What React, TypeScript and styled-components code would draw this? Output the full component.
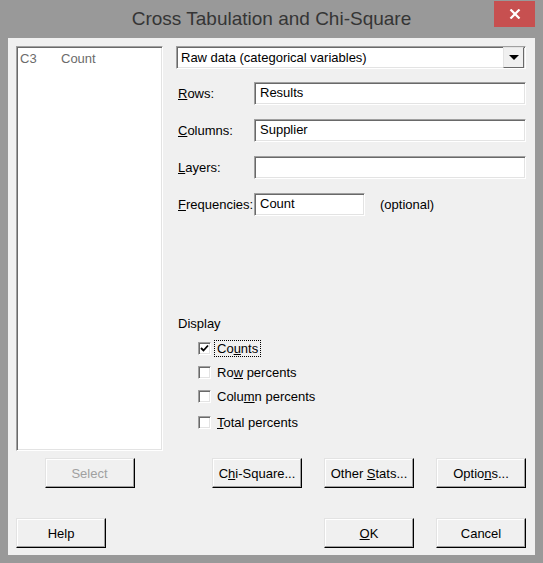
import React from 'react'
import styled, { createGlobalStyle } from 'styled-components'

const GlobalStyle = createGlobalStyle`
  html, body {
    margin: 0;
    padding: 0;
    background: #999999;
  }
  * {
    box-sizing: border-box;
  }
`

const Window = styled.div`
  width: 543px;
  height: 563px;
  background: #999999;
  display: flex;
  flex-direction: column;
  font-family: 'Liberation Sans', Arial, sans-serif;
  font-size: 13px;
  color: #000;
`

const TitleBar = styled.div`
  height: 38px;
  display: grid;
  grid-template-columns: 1fr auto 1fr;
  align-items: start;
  padding: 0 8px;
`

const Title = styled.div`
  grid-column: 2;
  padding-top: 8px;
  font-size: 19px;
  line-height: 21px;
  color: #353535;
`

const CloseButton = styled.div`
  grid-column: 3;
  justify-self: end;
  width: 41px;
  height: 26px;
  margin-top: 1px;
  background: #c75050;
  display: flex;
  align-items: center;
  justify-content: center;
`

const Client = styled.div`
  flex: 1;
  margin: 0 8px 8px;
  background: #f0f0f0;
  padding: 8px 9px 7px 8px;
  display: grid;
  grid-template-columns: 147px 1fr;
  grid-template-rows: 405px 37px 1fr 30px;
  column-gap: 13px;
`

const ListBox = styled.div`
  background: #fff;
  border: 1px solid;
  border-color: #a0a0a0 #ffffff #ffffff #a0a0a0;
  box-shadow: inset 1px 1px 0 #696969, inset -1px -1px 0 #e3e3e3;
  padding: 4px 3px;
`

const ListItem = styled.div`
  display: flex;
  color: #6b6b6b;
  line-height: 16px;
  span:first-child {
    width: 41px;
  }
`

const Form = styled.div`
  display: flex;
  flex-direction: column;
`

const Dropdown = styled.div`
  height: 23px;
  background: #fff;
  border: 1px solid;
  border-color: #a0a0a0 #ffffff #ffffff #a0a0a0;
  box-shadow: inset 1px 1px 0 #696969, inset -1px -1px 0 #e3e3e3;
  display: flex;
  align-items: center;
  justify-content: space-between;
  padding: 1px 1px 1px 4px;
`

const ArrowButton = styled.div`
  width: 21px;
  height: 21px;
  margin-top: -1px;
  background: #f0f0f0;
  border: 1px solid;
  border-color: #e3e3e3 #696969 #696969 #e3e3e3;
  display: flex;
  align-items: center;
  justify-content: center;
  &::after {
    content: '';
    border-left: 5px solid transparent;
    border-right: 5px solid transparent;
    border-top: 5px solid #000;
  }
`

const Fields = styled.div`
  margin-top: 13px;
  display: grid;
  grid-template-columns: 78px 1fr;
  row-gap: 14px;
  align-items: center;
`

const Label = styled.label`
  padding-left: 2px;
  line-height: 16px;
`

const InputRow = styled.div`
  display: flex;
  align-items: center;
`

const TextBox = styled.div<{ $width?: number }>`
  height: 23px;
  width: ${p => (p.$width ? `${p.$width}px` : '100%')};
  background: #fff;
  border: 1px solid;
  border-color: #a0a0a0 #ffffff #ffffff #a0a0a0;
  box-shadow: inset 1px 1px 0 #696969, inset -1px -1px 0 #e3e3e3;
  padding: 0 5px;
  line-height: 20px;
`

const Hint = styled.span`
  margin-left: 15px;
`

const DisplayGroup = styled.div`
  margin-top: 100px;
  display: flex;
  flex-direction: column;
`

const GroupLabel = styled.div`
  line-height: 16px;
  padding-left: 2px;
  margin-bottom: 4px;
`

const CheckRow = styled.div`
  height: 24px;
  display: flex;
  align-items: center;
  padding-left: 22px;
  &:last-child {
    margin-top: 2px;
  }
`

const CheckBox = styled.div`
  width: 13px;
  height: 13px;
  background: #fff;
  border: 1px solid;
  border-color: #a0a0a0 #ffffff #ffffff #a0a0a0;
  box-shadow: inset 1px 1px 0 #696969, inset -1px -1px 0 #e3e3e3;
  display: flex;
  align-items: center;
  justify-content: center;
  margin-right: 4px;
`

const CheckText = styled.span<{ $focused?: boolean }>`
  padding: 0 2px;
  line-height: 15px;
  outline: ${p => (p.$focused ? '1px dotted #000' : 'none')};
`

const ButtonRow = styled.div<{ $justify?: string }>`
  margin-top: 7px;
  display: flex;
  justify-content: ${p => p.$justify || 'flex-end'};
  gap: 22px;
`

const Button = styled.div<{ $disabled?: boolean }>`
  width: 90px;
  height: 30px;
  background: #f0f0f0;
  border: 1px solid;
  border-color: #e3e3e3 #000 #000 #e3e3e3;
  box-shadow: inset -1px -1px 0 #a0a0a0, inset 1px 1px 0 #fff;
  display: flex;
  align-items: center;
  justify-content: center;
  color: ${p => (p.$disabled ? '#a0a0a0' : '#000')};
`

const BottomRow = styled.div`
  grid-column: 1 / 3;
  grid-row: 4;
  display: flex;
  justify-content: space-between;
  gap: 22px;
  & > div:first-child {
    margin-right: auto;
  }
`

const checks = [
  { pre: 'Co', key: 'u', post: 'nts', checked: true },
  { pre: 'Ro', key: 'w', post: ' percents', checked: false },
  { pre: 'Colu', key: 'm', post: 'n percents', checked: false },
  { pre: '', key: 'T', post: 'otal percents', checked: false },
]

const App = () => {
  return (
    <Window>
      <GlobalStyle />
      <TitleBar>
        <Title>Cross Tabulation and Chi-Square</Title>
        <CloseButton>
          <svg width="12" height="10" viewBox="0 0 12 10">
            <path d="M1.5 0.5 L10.5 9.5 M10.5 0.5 L1.5 9.5" stroke="#fff" strokeWidth="2.2" />
          </svg>
        </CloseButton>
      </TitleBar>
      <Client>
        <ListBox>
          <ListItem>
            <span>C3</span>
            <span>Count</span>
          </ListItem>
        </ListBox>

        <Form>
          <Dropdown>
            <span>Raw data (categorical variables)</span>
            <ArrowButton />
          </Dropdown>

          <Fields>
            <Label><u>R</u>ows:</Label>
            <TextBox>Results</TextBox>
            <Label><u>C</u>olumns:</Label>
            <TextBox>Supplier</TextBox>
            <Label><u>L</u>ayers:</Label>
            <TextBox />
            <Label><u>F</u>requencies:</Label>
            <InputRow>
              <TextBox $width={111}>Count</TextBox>
              <Hint>(optional)</Hint>
            </InputRow>
          </Fields>

          <DisplayGroup>
            <GroupLabel>Display</GroupLabel>
            {checks.map((c, i) => (
              <CheckRow key={i}>
                <CheckBox>
                  {c.checked && (
                    <svg width="9" height="9" viewBox="0 0 9 9">
                      <path d="M1 4 L3.5 6.5 L8 1.5" stroke="#000" strokeWidth="1.8" fill="none" />
                    </svg>
                  )}
                </CheckBox>
                <CheckText $focused={i === 0}>
                  {c.pre}<u>{c.key}</u>{c.post}
                </CheckText>
              </CheckRow>
            ))}
          </DisplayGroup>
        </Form>

        <ButtonRow $justify="center">
          <Button $disabled><span>Select</span></Button>
        </ButtonRow>
        <ButtonRow>
          <Button><span>C<u>h</u>i-Square...</span></Button>
          <Button><span>Other <u>S</u>tats...</span></Button>
          <Button><span>Optio<u>n</u>s...</span></Button>
        </ButtonRow>

        <BottomRow>
          <Button><span>Help</span></Button>
          <Button><span><u>O</u>K</span></Button>
          <Button><span>Cancel</span></Button>
        </BottomRow>
      </Client>
    </Window>
  )
}

export default App
